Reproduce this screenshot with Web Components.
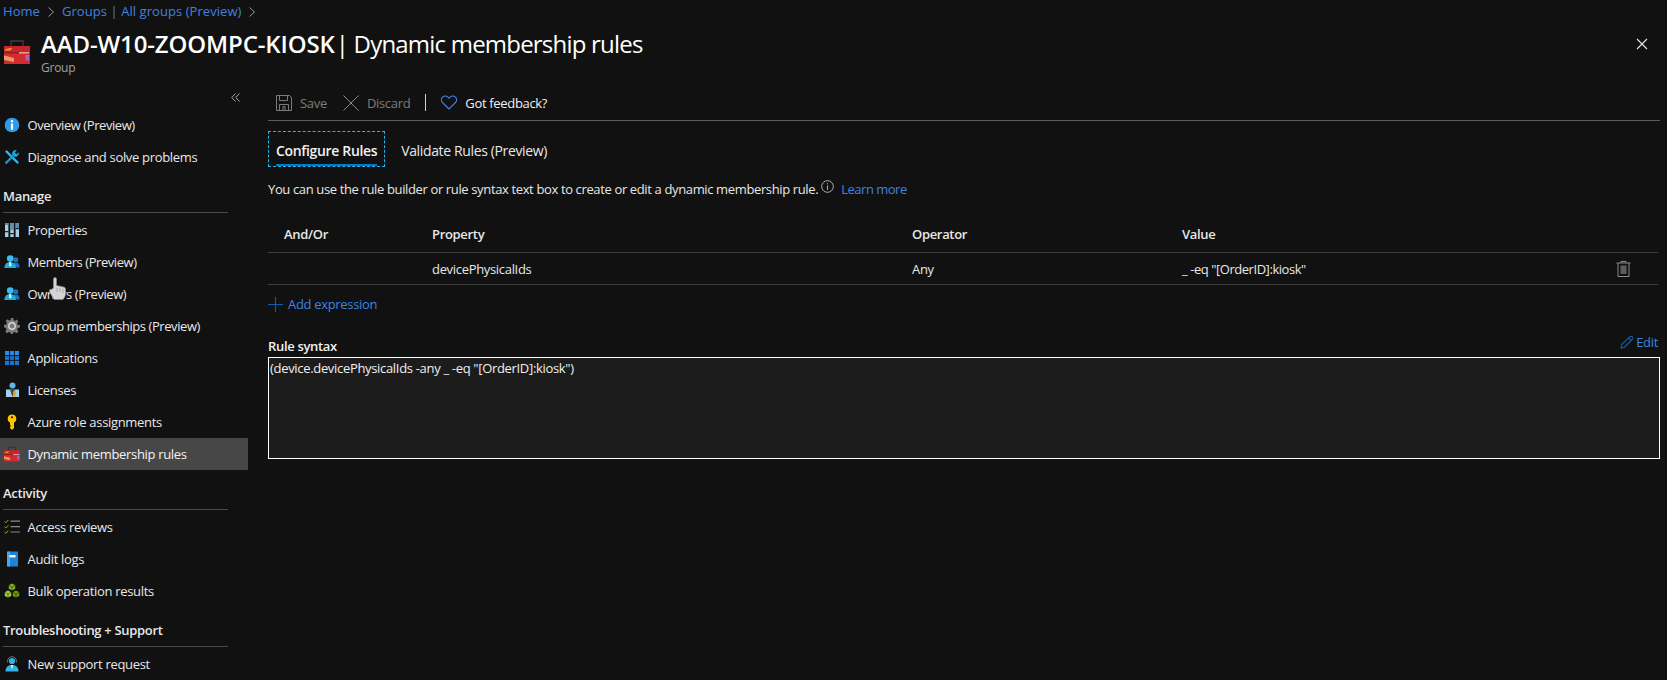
<!DOCTYPE html>
<html lang="en"><head><meta charset="utf-8"><title>Dynamic membership rules</title>
<style>
html,body{margin:0;padding:0;background:#111;height:680px;overflow:hidden}
body{font:13px/18px "Open Sans","Liberation Sans",sans-serif;color:#e8e8e8;letter-spacing:-.32px}
</style></head><body>
<az-page>
  <az-breadcrumb slot="crumbs"><a>Home</a><a>Groups | All groups (Preview)</a></az-breadcrumb>
  <az-header slot="header" name="AAD-W10-ZOOMPC-KIOSK" page="Dynamic membership rules" kind="Group"></az-header>
  <az-sidebar slot="side">
    <az-nav icon="info" tight>Overview (Preview)</az-nav>
    <az-nav icon="tools">Diagnose and solve problems</az-nav>
    <az-section>Manage</az-section>
    <az-nav icon="props">Properties</az-nav>
    <az-nav icon="users" tight>Members (Preview)</az-nav>
    <az-nav icon="users" tight>Owners (Preview)</az-nav>
    <az-nav icon="gear" tight>Group memberships (Preview)</az-nav>
    <az-nav icon="grid">Applications</az-nav>
    <az-nav icon="license">Licenses</az-nav>
    <az-nav icon="key">Azure role assignments</az-nav>
    <az-nav icon="toolbox" selected>Dynamic membership rules</az-nav>
    <az-section>Activity</az-section>
    <az-nav icon="review">Access reviews</az-nav>
    <az-nav icon="book">Audit logs</az-nav>
    <az-nav icon="cubes">Bulk operation results</az-nav>
    <az-section>Troubleshooting + Support</az-section>
    <az-nav icon="support">New support request</az-nav>
  </az-sidebar>
  <az-toolbar slot="main"></az-toolbar>
  <az-tabs slot="main"></az-tabs>
  <az-desc slot="main"></az-desc>
  <az-rules slot="main"></az-rules>
  <az-syntax slot="main">(device.devicePhysicalIds -any _ -eq "[OrderID]:kiosk")</az-syntax>
  <az-cursor slot="overlay"></az-cursor>
</az-page>
<script>
const TOOLBOX=`<svg viewBox="0 0 26 24" width="W" height="H"><path d="M7 6V1h12v5" fill="none" stroke="#333" stroke-width="1.800"/><path d="M0 6h26v7H0z" fill="#c8232a"/><path d="M0 13h26v11H0z" fill="#d42a2c"/><path d="M0 12.200h26v1.300H0z" fill="#8c1c20"/><path d="M15 12.200h10v1.300H15z" fill="#e8c8c0"/><path d="M1 9.200l6-1.500 1 1.200-2 1.600H1z" fill="#f4921c"/><path d="M0 15.500l10 2.500v4l-10-2z" fill="#e59a6e"/><path d="M21.500 15h3.500v5.500h-3.500z" fill="#9a6ac8"/></svg>`;
const ICONS={
 info:`<svg viewBox="0 0 16 16"><circle cx="8" cy="8" r="7.300" fill="#2f9be6"/><circle cx="8" cy="4.300" r="1.200" fill="#fff"/><path d="M6.900 6.500h2.200v6.200H6.900z" fill="#fff"/></svg>`,
 tools:`<svg viewBox="0 0 16 16"><path d="M2.500 2.500l11 11" stroke="#38b8e6" stroke-width="2.400" stroke-linecap="round"/><path d="M1.500 14.500L9.500 6.500" stroke="#1b95d0" stroke-width="2.400"/><path d="M8.200 5.500C7.700 3 10 .5 12.800 1.200L10.700 3.400l1.900 1.900 2.200-2.100c.7 2.800-1.900 5-4.300 4.500z" fill="#1fa6dc"/></svg>`,
 props:`<svg viewBox="0 0 16 16"><path d="M1 1h3.400v14H1zM6.300 1h3.400v14H6.300zM11.600 1h3.400v14h-3.400z" fill="#a6cfe4"/><path d="M1 1h3.400v2H1zM6.300 1h3.400v7H6.300zM11.600 1h3.400v5h-3.400z" fill="#5f8ea8"/><path d="M1 9h3.400v1.200H1zM6.300 11h3.400v1.200H6.300zM11.600 6h3.400v1.200h-3.400z" fill="#222"/></svg>`,
 users:`<svg viewBox="0 0 16 16"><circle cx="11.800" cy="5.800" r="2.500" fill="#1c6fc4"/><path d="M8 13.500c0-3 1.400-4.900 3.800-4.900s3.800 1.900 3.800 4.900z" fill="#1c6fc4"/><circle cx="6.200" cy="4.600" r="3.300" fill="#3cbce9"/><path d="M.4 14c0-3.800 2.200-6 5.800-6s5.800 2.200 5.800 6z" fill="#23a9e0"/><path d="M5.400 8.300h1.600l.3 3-1.100 1.100-1.100-1.100z" fill="#e8f8ff"/></svg>`,
 gear:`<svg viewBox="0 0 16 16"><path d="M6.800 0h2.400l.4 2.300 1.500.6L12.600 1.600l1.800 1.800-1.300 1.900.6 1.500 2.300.4v2.400l-2.300.4-.6 1.500 1.300 1.900-1.800 1.800-1.900-1.300-1.500.6-.4 2.300H6.800l-.4-2.300-1.500-.6-1.900 1.300-1.800-1.800 1.300-1.900-.6-1.500L0 9.200V6.800l2.300-.4.6-1.500-1.300-1.900 1.800-1.800 1.900 1.300 1.500-.6z" fill="#7a7a7a"/><circle cx="8" cy="8" r="3.200" fill="none" stroke="#d8d8d8" stroke-width="1.400"/></svg>`,
 grid:`<svg viewBox="0 0 16 16"><path d="M1 1h14v14H1z" fill="#1874d2"/><path d="M1 1h14v4.300H1z" fill="#3a9bf0" opacity=".55"/><path d="M5.600 1v14M10.400 1v14M1 5.600h14M1 10.400h14" stroke="#111" stroke-width=".9"/></svg>`,
 license:`<svg viewBox="0 0 16 16"><circle cx="8.500" cy="3.500" r="3" fill="#5fb6e0"/><path d="M2 15V7.500h13V15z" fill="#9fd3ec"/><path d="M6 7.500h5L8.500 15z" fill="#23495f"/><circle cx="10.600" cy="10.500" r="1.800" fill="#f39b1f"/><path d="M9.700 11.500h1.800V15H9.700z" fill="#f39b1f"/></svg>`,
 key:`<svg viewBox="0 0 16 16"><path d="M8 .5a4.300 4.300 0 0 1 2 8.100V14l-2 2-2-2v-1l1-1-1-1V8.600A4.300 4.300 0 0 1 8 .5z" fill="#fbc600"/><circle cx="8" cy="3.200" r="1" fill="#111"/></svg>`,
 toolbox:TOOLBOX.replace('W','16').replace('H','15'),
 review:`<svg viewBox="0 0 16 16"><path d="M6.500 2.200H16M6.500 7.600H16M6.500 13H16" stroke="#8a8a8a" stroke-width="1.200"/><path d="M.5 2.500l1.300 1.200L4.300 1M.5 7.800L1.800 9l2.500-2.700M.5 13.200l1.300 1.200 2.500-2.700" fill="none" stroke="#8fb31e"/></svg>`,
 book:`<svg viewBox="0 0 16 16"><path d="M3 1.500C3 .8 3.500.5 4 .5h10v15H4c-.6 0-1-.4-1-1z" fill="#1f82d6"/><path d="M3 1.500C3 .8 3.500.5 4 .5h2v15H4c-.6 0-1-.4-1-1z" fill="#46a8ea"/><path d="M5.500 4h6v2.400h-6z" fill="#fff"/></svg>`,
 cubes:`<svg viewBox="0 0 16 16"><path d="M8 .5l3.200 1.700v3.600L8 7.500 4.800 5.800V2.200z" fill="#86b312"/><path d="M4 7.600l3.200 1.700v3.600L4 14.600.8 12.900V9.300z" fill="#a5d23a"/><path d="M12 7.600l3.200 1.700v3.600L12 14.600l-3.200-1.700V9.300z" fill="#6f9a0e"/><path d="M8 4L4.800 2.200M8 4l3.200-1.800M8 4v3.500M4 11L.8 9.300M4 11l3.200-1.700M4 11v3.600M12 11L8.800 9.300M12 11l3.200-1.700M12 11v3.600" stroke="#111" stroke-width=".5" fill="none"/></svg>`,
 support:`<svg viewBox="0 0 16 16"><circle cx="8" cy="5" r="3.100" fill="#32b3e4"/><path d="M3.600 6.500V5a4.400 4.400 0 0 1 8.800 0v1.500" fill="none" stroke="#777" stroke-width=".9"/><path d="M1.500 15.500c0-4 2-6.600 6.500-6.600s6.500 2.600 6.500 6.600z" fill="#32b3e4"/><path d="M7 9h2l-.5 3.500h-1z" fill="#e8f6fc"/></svg>`
};
function def(name,css,html,init){
  customElements.define(name,class extends HTMLElement{
    constructor(){super();const r=this.attachShadow({mode:'open'});r.innerHTML=`<style>${css}</style>${typeof html==='function'?html(this):html}`}
    connectedCallback(){ if(init) init(this) }
  });
}
def('az-page',`
:host{display:grid;grid-template-columns:248px 1fr;grid-template-rows:22px 62px 596px;width:1667px;height:680px;position:relative;overflow:hidden}
.top{grid-column:1/3}
.main{display:flex;flex-direction:column;padding-left:20px;padding-right:7px;min-width:0}
`,`<div class="top"><slot name="crumbs"></slot></div><div class="top"><slot name="header"></slot></div>
<div><slot name="side"></slot></div><div class="main"><slot name="main"></slot></div><slot name="overlay"></slot>`);

customElements.define('az-breadcrumb',class extends HTMLElement{
  constructor(){super();const r=this.attachShadow({mode:'open'});
  r.innerHTML=`<style>:host{display:flex;align-items:center;height:22px;padding-left:3px;color:#3f83e0;letter-spacing:.06px}
  ::slotted(a){color:#3f83e0}
  svg{width:8px;height:12px;margin:1px 7px 0 7px}</style>
  <slot name="a"></slot><svg viewBox="0 0 8 12"><path d="M1.500 1.500L6.500 6l-5 4.500" fill="none" stroke="#9a9a9a"/></svg><slot name="b"></slot><svg viewBox="0 0 8 12"><path d="M1.500 1.500L6.500 6l-5 4.500" fill="none" stroke="#9a9a9a"/></svg>`;}
  connectedCallback(){const k=this.querySelectorAll('a');if(k[0])k[0].slot='a';if(k[1])k[1].slot='b';}
});

def('az-header',`
:host{display:flex;height:62px;position:relative;color:#fff}
.ic{width:26px;height:24px;margin:18px 11px 0 4px;flex:none}
.t{display:flex;flex-direction:column}
h1{margin:7px 0 0;font-size:24px;line-height:30px;font-weight:400;letter-spacing:-.79px;white-space:nowrap}
b{font-weight:600;letter-spacing:-.13px;margin-right:-4.500px}
small{font-size:12px;line-height:16px;color:#a2a2a2;margin-top:1px;letter-spacing:-.25px}
.x{position:absolute;right:19px;top:16px;width:12px;height:12px}
`,h=>`<div class="ic">${TOOLBOX.replace('W','26').replace('H','24')}</div>
<div class="t"><h1><b>${h.getAttribute('name')}</b> | ${h.getAttribute('page')}</h1><small>${h.getAttribute('kind')}</small></div>
<svg class="x" viewBox="0 0 12 12"><path d="M1 1l10 10M11 1L1 11" stroke="#e8e8e8" stroke-width="1.100"/></svg>`);

def('az-sidebar',`
:host{display:block;width:248px}
.c{height:25px;display:flex;justify-content:flex-end;align-items:center;padding-right:8px}
svg{width:9px;height:9px;margin-top:1px}
`,`<div class="c"><svg viewBox="0 0 9 9"><path d="M4.500 .5L.8 4.500l3.700 4M8.500 .5L4.800 4.500l3.700 4" fill="none" stroke="#a8a8a8"/></svg></div><slot></slot>`);

def('az-nav',`
:host{display:flex;align-items:center;height:32px;padding-left:4px;gap:7.500px;white-space:nowrap;color:#e8e8e8}
:host([tight]){letter-spacing:-.43px}
:host([selected]){background:#474747;color:#f4f4f4}
.i{width:16px;height:16px;flex:none;display:flex;align-items:center}
svg{width:16px;height:16px;display:block}
`,h=>`<span class="i">${ICONS[h.getAttribute('icon')]}</span><slot></slot>`);

def('az-section',`
:host{display:flex;align-items:flex-end;height:41px;box-sizing:border-box;margin:0 20px 0 3px;padding-bottom:7px;border-bottom:1px solid #4a4a4a;font-weight:600;color:#e8e8e8;position:relative;top:-1px}
`,`<slot></slot>`);

def('az-toolbar',`
:host{display:flex;align-items:center;height:37px;box-sizing:border-box;border-bottom:1px solid #5c5c5c;padding:1px 0 0 8px;color:#7c7c7c;white-space:nowrap;flex:none}
svg{flex:none}
.l{margin-left:8px}.gap{margin-left:16px}
.d{width:1px;height:17px;background:#d0d0d0;margin:0 15px}
.f{color:#f0f0f0;margin-left:8px}
`,`<svg width="16" height="16" viewBox="0 0 16 16"><path d="M.5.500h13l2 2v13H.5z" fill="none" stroke="#7c7c7c"/><path d="M3.500.500v5h8v-5M3.500 15.500v-6h9v6M7 11.500h2v4H7z" fill="none" stroke="#7c7c7c"/></svg><span class="l">Save</span>
<svg class="gap" width="16" height="16" viewBox="0 0 16 16"><path d="M.5.500l15 15M15.500.500l-15 15" stroke="#8a8a8a"/></svg><span class="l">Discard</span>
<span class="d"></span>
<svg width="16" height="15" viewBox="0 0 16 15"><path d="M8 14L1.500 7.500a3.800 3.800 0 0 1 0-5.400 3.800 3.800 0 0 1 5.400 0L8 3.200l1.100-1.100a3.800 3.800 0 0 1 5.400 5.400z" fill="none" stroke="#3f83e0" stroke-width="1.100"/></svg><span class="f">Got feedback?</span>`);

def('az-tabs',`
:host{display:flex;margin-top:10px;height:36px;white-space:nowrap;flex:none;font-size:14px;letter-spacing:-.36px}
.t{box-sizing:border-box;height:36px;padding:3px 8px 0;display:flex;align-items:center;position:relative;color:#e8e8e8}
.on{font-weight:600;outline:1px dashed #1fb6ee;outline-offset:-1px;color:#f2f2f2;letter-spacing:-.34px}
.on::after{content:"";position:absolute;left:8px;right:8px;bottom:1px;height:2px;background:#0078d4}
.v{margin-left:8px}
`,`<div class="t on">Configure Rules</div><div class="t v">Validate Rules (Preview)</div>`);

def('az-desc',`
:host{display:flex;align-items:center;height:18px;margin-top:13px;white-space:nowrap;flex:none;color:#e8e8e8;letter-spacing:-.365px}
svg{margin:-6px 0 0 3px}
a{color:#3f83e0;margin-left:7px;letter-spacing:-.5px}
`,`You can use the rule builder or rule syntax text box to create or edit a dynamic membership rule.<svg width="13" height="13" viewBox="0 0 13 13"><circle cx="6.500" cy="6.500" r="5.800" fill="none" stroke="#b0b0b0"/><path d="M6.500 5.500v4.200M6.500 3.300v1" stroke="#b0b0b0" stroke-width="1.100"/></svg><a>Learn more</a>`);

def('az-rules',`
:host{display:block;flex:none;margin-top:19px;width:1390px}
.r{display:grid;grid-template-columns:164px 480px 270px 1fr 42px;align-items:center;border-bottom:1px solid #3d3d3d;box-sizing:border-box}
.h{height:36px;font-weight:600;padding-bottom:2px}
.b{height:32px;padding-top:1px}
.r>*:first-child{padding-left:16px}
.del{display:flex;justify-content:flex-start}
.add{display:flex;align-items:center;height:38px;color:#3f83e0;gap:5px}
`,`<div class="r h"><span>And/Or</span><span>Property</span><span>Operator</span><span>Value</span><span></span></div>
<div class="r b"><span></span><span>devicePhysicalIds</span><span>Any</span><span style="letter-spacing:-.45px">_ -eq "[OrderID]:kiosk"</span>
<span class="del"><svg width="15" height="16" viewBox="0 0 15 16"><path d="M.5 2h14M5 2V.5h5V2M2 2v13.500h11V2" fill="none" stroke="#8a8a8a"/><path d="M4.500 4.500h6v8.500h-6z" fill="#5c5c5c"/></svg></span></div>
<div class="add"><svg width="15" height="15" viewBox="0 0 15 15"><path d="M7.500 0v15M0 7.500h15" stroke="#0f5fb0" stroke-width="1.100"/></svg>Add expression</div>`);

def('az-syntax',`
:host{display:block;flex:none;margin-top:11px;width:1392px}
.l{display:flex;justify-content:space-between;align-items:flex-end;height:22px;padding-right:2px}
b{font-weight:600;color:#f0f0f0;position:relative;top:-1px}
.e{display:flex;align-items:center;gap:3px;color:#3f83e0;position:relative;top:-5px}
.box{box-sizing:border-box;height:102px;margin-top:1px;border:1px solid #fff;background:#1c1c1c;padding:1px 0 0 1px;color:#f0f0f0;white-space:pre}
`,`<div class="l"><b>Rule syntax</b><span class="e"><svg width="13" height="13" viewBox="0 0 13 13"><path d="M1 12l.8-3.500L9.500.8a1.500 1.500 0 0 1 2.700 2.700L4.500 11.200zM8.500 2l2.500 2.500" fill="none" stroke="#0f5fb0" stroke-width="1.100"/></svg>Edit</span></div><div class="box"><slot></slot></div>`);

def('az-cursor',`
:host{position:absolute;left:49px;top:277px;width:17px;height:23px;display:block}
svg{display:block}
`,`<svg width="17" height="23" viewBox="0 0 17 23"><path d="M4.500 11V2a1.500 1.500 0 0 1 3 0v6.500l7 1.500c1.300.3 2 1 2 2.500v4.500c0 2-1 3.500-2.500 5.500H5C3.500 20 1.500 16.500.5 14.500c-.5-1.500.8-2.700 2-2z" fill="#d4d4d4" stroke="#8c8c8c" stroke-width=".7"/><path d="M8 11v4M11 11v4M14 12v4" stroke="#9a9a9a" stroke-width=".8"/></svg>`);
</script>
</body></html>
